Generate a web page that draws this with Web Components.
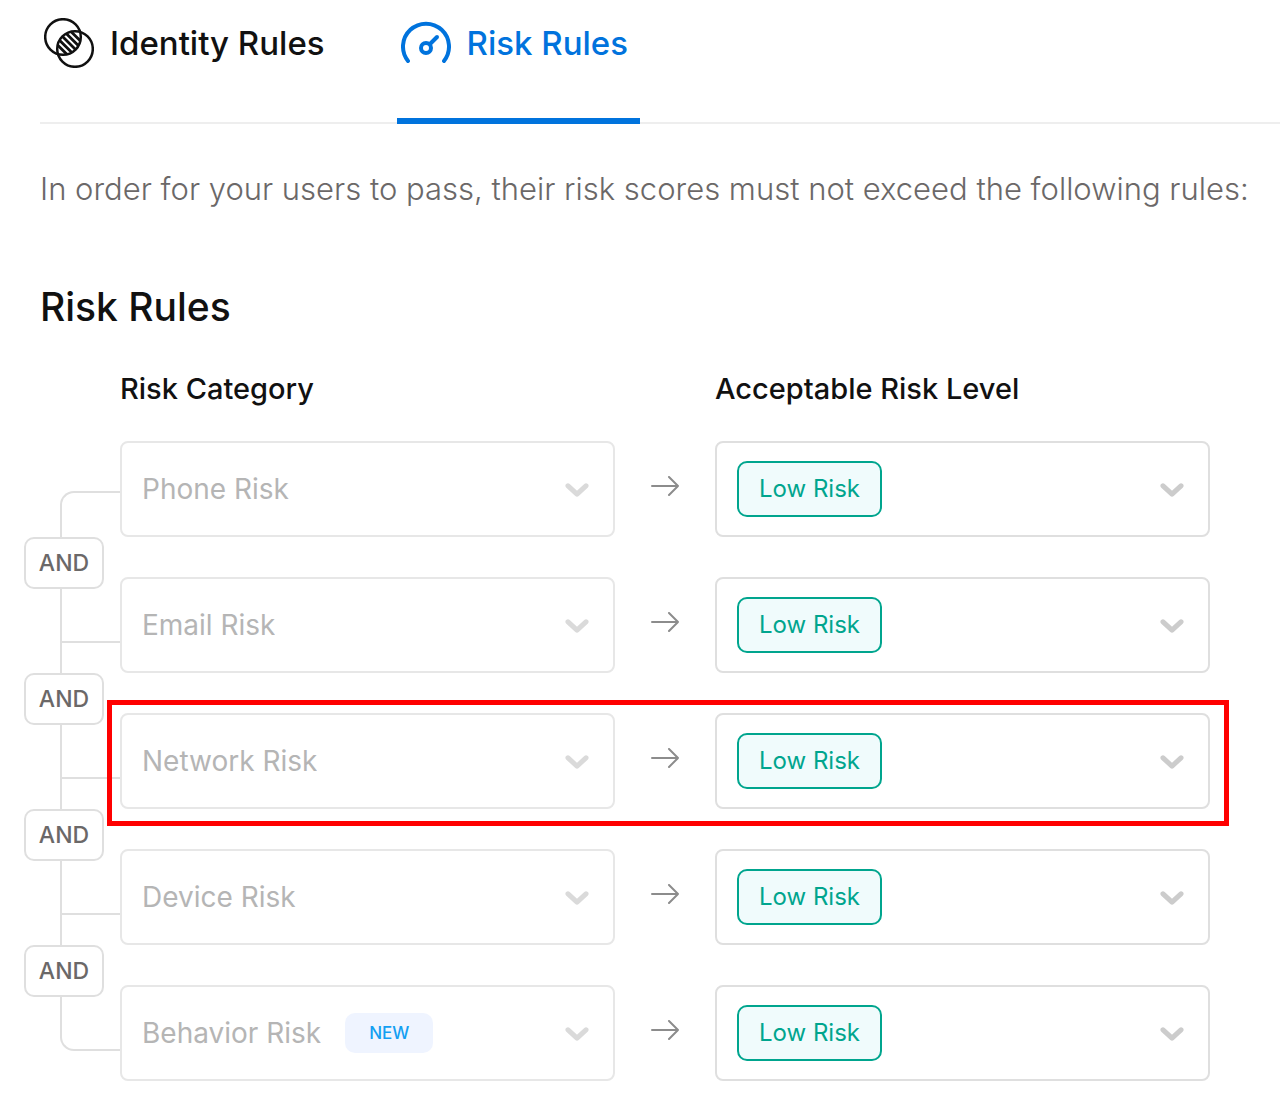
<!DOCTYPE html>
<html lang="en">
<head>
<meta charset="utf-8">
<title>Risk Rules</title>
<style>
    body {
        margin: 0;
        background-color: #fff;
        color: #111;
        font-family: Inter, "Liberation Sans", sans-serif;
    }
</style>
</head>
<body>
<risk-page></risk-page>

<script>
const icons = {
    identity: `
        <svg width="50" height="50" viewBox="0 0 50 50" fill="none" stroke="currentColor" stroke-width="2.5" aria-hidden="true">
            <clipPath id="first"><circle cx="19" cy="19" r="17.8"/></clipPath>
            <clipPath id="second"><circle cx="31" cy="31" r="17.8"/></clipPath>
            <g clip-path="url(#first)"><g clip-path="url(#second)" stroke-width="2.8">
                <path d="M0 0l50 50M0 6.7l40 40M6.7 0l40 40M0 13.4l40 40M13.4 0l40 40"/>
            </g></g>
            <circle cx="19" cy="19" r="17.8"/>
            <circle cx="31" cy="31" r="17.8"/>
        </svg>`,
    gauge: `
        <svg width="50" height="50" viewBox="0 0 50 50" fill="none" stroke="currentColor" stroke-width="4" stroke-linecap="round" aria-hidden="true">
            <path d="M7 43A23 23 0 1 1 43 43"/>
            <circle cx="25" cy="30" r="5"/>
            <path d="M29 26l7-7"/>
        </svg>`
}

class RuleTab extends HTMLElement {
    constructor() {
        super();
        this.attachShadow({ mode: "open" })
    }

    connectedCallback() {
        const active = this.hasAttribute('active');
        this.shadowRoot.innerHTML = `
            <style>
                :host {
                    display: block;
                }

                button {
                    display: flex;
                    align-items: center;
                    gap: 16px;
                    padding: 18px 12px 50px 4px;
                    border: 0;
                    border-bottom: 6px solid transparent;
                    background: none;
                    color: inherit;
                    font: 500 33px/50px Inter, "Liberation Sans", sans-serif;
                    white-space: nowrap;
                    cursor: pointer;
                }

                button[aria-selected="true"] {
                    color: #0073dd;
                    border-bottom-color: #0073dd;
                }
            </style>
            <button type="button" role="tab" aria-selected="${active}">
                ${icons[this.getAttribute('icon')]}
                <slot></slot>
            </button>
        `;
    }
}

class RuleSelect extends HTMLElement {
    constructor() {
        super();
        this.attachShadow({ mode: "open" })
    }

    get kind() {
        return this.getAttribute('kind');
    }

    connectedCallback() {
        const disabled = this.kind === 'category' ? 'disabled' : '';
        const value = this.getAttribute('value');
        this.shadowRoot.innerHTML = `
            <style>
                :host {
                    display: flex;
                    align-items: center;
                    gap: 24px;
                    box-sizing: border-box;
                    min-width: 0;
                    height: 96px;
                    padding: 0 24px 0 20px;
                    border: 2px solid #dfdfdf;
                    border-radius: 8px;
                    background-color: #fff;
                    color: #ccc;
                }

                :host([kind="category"]) {
                    border-color: #e7e7e7;
                    color: #dadada;
                }

                select {
                    appearance: none;
                    field-sizing: content;
                    margin: 0;
                    padding: 0;
                    border: 0;
                    background: none;
                    color: #b5b5b5;
                    opacity: 1;
                    font: 400 28px/40px Inter, "Liberation Sans", sans-serif;
                }

                .level {
                    height: 56px;
                    padding: 0 20px;
                    border: 2px solid #00a58e;
                    border-radius: 10px;
                    background-color: #f0fbfc;
                    color: #00a58e;
                    font-size: 24px;
                }

                svg {
                    flex: none;
                    margin-left: auto;
                }
            </style>
            <select class="${this.kind}" aria-label="${this.getAttribute('label')}" ${disabled}>
                <option>${value}</option>
            </select>
            <slot></slot>
            <svg width="24" height="16" viewBox="0 0 24 16" fill="none" stroke="currentColor" stroke-width="5" stroke-linecap="round" stroke-linejoin="round" aria-hidden="true">
                <path d="M3 4.8l9 8.4 9-8.4"/>
            </svg>
        `;
    }
}

class NewBadge extends HTMLElement {
    constructor() {
        super();
        this.attachShadow({ mode: "open" })
    }

    connectedCallback() {
        this.shadowRoot.innerHTML = `
            <style>
                :host {
                    display: block;
                    padding: 0 24px;
                    border-radius: 10px;
                    background-color: #eff4ff;
                    color: #139ff2;
                    font-size: 17px;
                    font-weight: 500;
                    line-height: 40px;
                }
            </style>
            <slot></slot>
        `;
    }
}

class RiskRow extends HTMLElement {
    constructor() {
        super();
        this.attachShadow({ mode: "open" })
    }

    connectedCallback() {
        this.shadowRoot.innerHTML = `
            <style>
                :host {
                    display: grid;
                    grid-template-columns: 1fr 100px 1fr;
                    align-items: center;
                    position: relative;
                }

                .arrow {
                    justify-self: center;
                    padding-bottom: 6px;
                    color: #8c8c8c;
                }

                :host([highlight])::after {
                    content: "";
                    position: absolute;
                    inset: -13px -19px -17px -13px;
                    border: 5px solid #f00;
                    pointer-events: none;
                }
            </style>
            <rule-select kind="category" label="Risk Category" value="${this.getAttribute('category')}"><slot></slot></rule-select>
            <svg class="arrow" width="28" height="20" viewBox="0 0 28 20" fill="none" stroke="currentColor" stroke-width="2" stroke-linecap="round" stroke-linejoin="round" aria-hidden="true">
                <path d="M1 10h26M18 1l9 9-9 9"/>
            </svg>
            <rule-select kind="level" label="Acceptable Risk Level" value="${this.getAttribute('level')}"></rule-select>
        `;
    }
}

class RuleConnector extends HTMLElement {
    constructor() {
        super();
        this.attachShadow({ mode: "open" })
    }

    connectedCallback() {
        const and = '<span class="and">AND</span>';
        const link = '<div class="link"></div>';
        this.shadowRoot.innerHTML = `
            <style>
                :host {
                    display: flex;
                    flex-direction: column;
                    padding-top: 50px;
                    --line: 2px solid #dfdfdf;
                }

                div {
                    box-sizing: border-box;
                    margin-left: 36px;
                    border-left: var(--line);
                }

                .start {
                    height: 46px;
                    border-top: var(--line);
                    border-top-left-radius: 14px;
                }

                .link {
                    height: 84px;
                    padding-top: 52px;
                }

                .link::before {
                    content: "";
                    display: block;
                    border-top: var(--line);
                }

                .end {
                    height: 54px;
                    border-bottom: var(--line);
                    border-bottom-left-radius: 14px;
                }

                .and {
                    box-sizing: border-box;
                    width: 80px;
                    border: var(--line);
                    border-radius: 10px;
                    color: #6b6868;
                    font-size: 23px;
                    font-weight: 500;
                    line-height: 48px;
                    text-align: center;
                }
            </style>
            <div class="start"></div>
            ${and}${link}${and}${link}${and}${link}${and}
            <div class="end"></div>
        `;
    }
}

class RiskPage extends HTMLElement {
    constructor() {
        super();
        this.attachShadow({ mode: "open" })
    }

    connectedCallback() {
        this.shadowRoot.innerHTML = `
            <style>
                :host {
                    display: block;
                    padding: 0 4px 12px 40px;
                }

                .tabs {
                    display: flex;
                    gap: 60px;
                    box-shadow: inset 0 -2px #eee;
                }

                .intro {
                    margin: 40px 0 0;
                    color: #6b6868;
                    font-size: 31px;
                    font-weight: 300;
                    line-height: 50px;
                }

                h2 {
                    margin: 68px 0 36px;
                    font-size: 39px;
                    font-weight: 500;
                    line-height: 50px;
                }

                .rules {
                    display: grid;
                    grid-template-columns: 96px 1fr;
                    margin: 0 70px 0 -16px;
                }

                .heads {
                    grid-column: 2;
                    display: grid;
                    grid-template-columns: 1fr 1fr;
                    column-gap: 100px;
                    margin-bottom: 32px;
                }

                h3 {
                    margin: 0;
                    font-size: 29px;
                    font-weight: 500;
                    line-height: 41px;
                }

                .rows {
                    display: grid;
                    gap: 40px;
                }
            </style>
            <div class="tabs" role="tablist">
                <rule-tab icon="identity">Identity Rules</rule-tab>
                <rule-tab icon="gauge" active>Risk Rules</rule-tab>
            </div>
            <p class="intro">In order for your users to pass, their risk scores must not exceed the following rules:</p>
            <h2>Risk Rules</h2>
            <div class="rules">
                <div class="heads">
                    <h3>Risk Category</h3>
                    <h3>Acceptable Risk Level</h3>
                </div>
                <rule-connector></rule-connector>
                <div class="rows">
                    <risk-row category="Phone Risk" level="Low Risk"></risk-row>
                    <risk-row category="Email Risk" level="Low Risk"></risk-row>
                    <risk-row category="Network Risk" level="Low Risk" highlight></risk-row>
                    <risk-row category="Device Risk" level="Low Risk"></risk-row>
                    <risk-row category="Behavior Risk" level="Low Risk"><new-badge>NEW</new-badge></risk-row>
                </div>
            </div>
        `;
    }
}

customElements.define('rule-tab', RuleTab)
customElements.define('rule-select', RuleSelect)
customElements.define('new-badge', NewBadge)
customElements.define('risk-row', RiskRow)
customElements.define('rule-connector', RuleConnector)
customElements.define('risk-page', RiskPage)
</script>
</body>
</html>
